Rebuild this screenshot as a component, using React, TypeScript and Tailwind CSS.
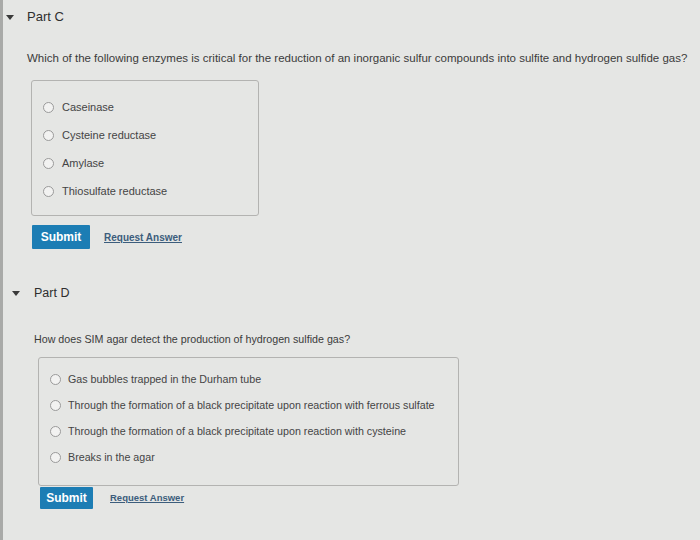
import React from "react";

const partC = ["Caseinase", "Cysteine reductase", "Amylase", "Thiosulfate reductase"];
const partD = [
	"Gas bubbles trapped in the Durham tube",
	"Through the formation of a black precipitate upon reaction with ferrous sulfate",
	"Through the formation of a black precipitate upon reaction with cysteine",
	"Breaks in the agar",
];

const Caret = () => (
	<svg width="8" height="5" viewBox="0 0 8 5" className="shrink-0">
		<path d="M0 0 L8 0 L4 5 Z" fill="#3a3a3a" />
	</svg>
);

const Radio = () => (
	<span className="inline-block w-[11px] h-[11px] rounded-full border border-[#9a9a9a] bg-[#f2f2f1] shrink-0" />
);

export default function App() {
	return (
		<div
			className="w-[700px] h-[540px] overflow-hidden bg-[#e5e6e4] border-l-[3px] border-[#a9aaa8] text-[#3b3b3b]"
			style={{ fontFamily: '"Liberation Sans", Arial, sans-serif' }}
		>
			{/* Part C */}
			<div className="pl-[3px] pt-[10px]">
				<div className="flex items-center h-[14px]">
					<Caret />
					<span className="ml-[13px] text-[13px] text-[#2e2e2e]">Part C</span>
				</div>
				<p className="ml-[21px] mt-[27px] text-[11.5px] leading-[14px] whitespace-nowrap">
					Which of the following enzymes is critical for the reduction of an inorganic sulfur compounds into sulfite and hydrogen sulfide gas?
				</p>
				<div className="ml-[25px] mt-[15px] w-[228px] h-[136px] border border-[#b3b3b1] rounded-[3px] pt-[19px] pl-[11px]">
					<ul className="flex flex-col gap-[14px]">
						{partC.map((opt) => (
							<li key={opt} className="flex items-center h-[14px]">
								<Radio />
								<span className="ml-[8px] text-[11px] text-[#444]">{opt}</span>
							</li>
						))}
					</ul>
				</div>
				<div className="ml-[26px] mt-[9px] flex items-center">
					<button className="w-[58px] h-[24px] bg-[#1c7db4] text-white text-[12px] font-bold rounded-[1px]">
						Submit
					</button>
					<span className="ml-[14px] text-[10px] font-bold text-[#3c5d7c] underline">Request Answer</span>
				</div>
			</div>

			{/* Part D */}
			<div className="pl-[9px] pt-[37px]">
				<div className="flex items-center h-[14px]">
					<Caret />
					<span className="ml-[14px] text-[12.5px] text-[#2e2e2e]">Part D</span>
				</div>
				<p className="ml-[22px] mt-[32px] text-[10.7px] leading-[14px] whitespace-nowrap">
					How does SIM agar detect the production of hydrogen sulfide gas?
				</p>
				<div className="ml-[26px] mt-[11px] w-[421px] h-[129px] border border-[#b3b3b1] rounded-[3px] pt-[14px] pl-[11px]">
					<ul className="flex flex-col gap-[12px]">
						{partD.map((opt) => (
							<li key={opt} className="flex items-center h-[14px]">
								<Radio />
								<span className="ml-[7px] text-[10.7px] text-[#444]">{opt}</span>
							</li>
						))}
					</ul>
				</div>
				<div className="ml-[28px] mt-[1px] flex items-center">
					<button className="w-[53px] h-[22px] bg-[#1c7db4] text-white text-[12px] font-bold rounded-[1px]">
						Submit
					</button>
					<span className="ml-[17px] text-[9.5px] font-bold text-[#3c5d7c] underline">Request Answer</span>
				</div>
			</div>
		</div>
	);
}
